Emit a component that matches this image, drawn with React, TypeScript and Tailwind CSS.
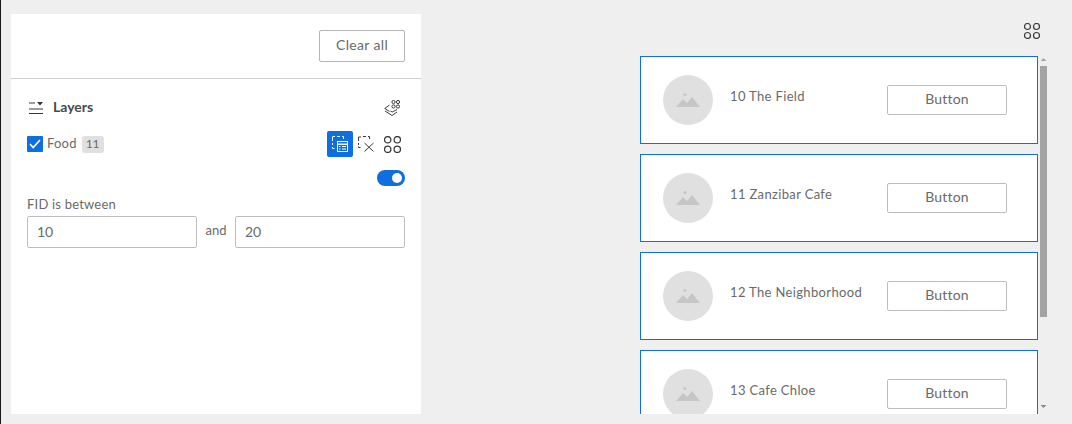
import React from "react";

const Grid = ({ size = 16 }: { size?: number }) => (
  <svg width={size} height={size} viewBox="0 0 16 16" fill="none" stroke="#3a3a3a" strokeWidth="1.2">
    <circle cx="3.5" cy="3.5" r="3" />
    <circle cx="12.5" cy="3.5" r="3" />
    <circle cx="3.5" cy="12.5" r="3" />
    <circle cx="12.5" cy="12.5" r="3" />
  </svg>
);

const Card = ({ title }: { title: string }) => (
  <div className="shrink-0 w-[398px] h-[88px] border border-[#0f6fe0] bg-white flex items-center pl-[22px] pr-[30px]">
    <div className="w-[50px] h-[50px] rounded-full bg-[#e0e0e0] flex items-center justify-center shrink-0">
      <svg width="26" height="16" viewBox="0 0 26 16" fill="#c6c6c6">
        <circle cx="10" cy="2.5" r="1.5" />
        <path d="M1 15 L8 7 L12 11 L17 5 L25 15 Z" />
      </svg>
    </div>
    <div className="ml-[17px] flex-1 text-[13px] text-[#6a6a6a] pb-[7px] tracking-[0.35px]">{title}</div>
    <button className="w-[120px] h-[30px] pb-[3px] border border-[#bdbdbd] rounded-[2px] text-[14px] text-[#6a6a6a] tracking-[0.2px] bg-white">Button</button>
  </div>
);

export default function App() {
  return (
    <div className="w-[1072px] h-[424px] bg-[#efefef] border-l border-[#1a1a1a] flex overflow-hidden font-['Lato','Noto_Sans',sans-serif] text-[#6a6a6a]">
      <div className="w-[410px] h-[400px] ml-[10px] mt-[14px] bg-white flex flex-col shrink-0">
        <div className="h-[65px] border-b border-[#d0d0d0] flex justify-end items-start pt-[16px] pr-[16px] shrink-0">
          <button className="w-[86px] h-[32px] pb-[3px] border border-[#b5b5b5] rounded-[2px] text-[14px] text-[#6a6a6a] tracking-[0.35px]">Clear all</button>
        </div>
        <div className="px-[16px] flex flex-col">
          <div className="flex items-center h-[20px] mt-[19px]">
            <svg width="16" height="16" viewBox="0 0 16 16" fill="none" stroke="#3a3a3a" strokeWidth="1" className="ml-[1px] mt-[2px]">
              <path d="M1 2 H7 M1 8 H15 M1 12.5 H15" />
              <path d="M9 1 H15 L12 4.5 Z" fill="#333" stroke="none" />
            </svg>
            <span className="ml-[9px] text-[14px] font-bold text-[#4a4a4a] pb-[3px]">Layers</span>
            <svg width="16" height="16" viewBox="0 0 16 16" fill="none" stroke="#3a3a3a" strokeWidth="1" className="ml-auto mr-[5px]">
              <circle cx="9.5" cy="2" r="1.6" />
              <circle cx="14" cy="2" r="1.6" />
              <circle cx="9.5" cy="6.5" r="1.6" />
              <circle cx="14" cy="6.5" r="1.6" />
              <path d="M5.5 5 L0.7 8.5 L5.5 11.5 M1 11 L8 15.5 L13 12 M6.5 11 L8.2 12 L13 9.5" />
            </svg>
          </div>
          <div className="flex items-center h-[26px] mt-[13px]">
            <div className="w-[16px] h-[16px] rounded-[1px] bg-[#0f6fe0] flex items-center justify-center">
              <svg width="12" height="10" viewBox="0 0 12 10" fill="none" stroke="white" strokeWidth="1.6">
                <path d="M1 5 L4.2 8.5 L11 1" />
              </svg>
            </div>
            <span className="ml-[4px] text-[13px] tracking-[0.2px]">Food</span>
            <span className="ml-[5px] w-[22px] h-[17px] rounded-[3px] bg-[#e0e0e0] text-[12px] flex items-center justify-center">11</span>
            <div className="ml-auto w-[26px] h-[26px] rounded-[2px] bg-[#0f6fe0] flex items-center justify-center">
              <svg width="16" height="16" viewBox="0 0 16 16" fill="none" stroke="white" strokeWidth="1">
                <path d="M0.5 5 V1 C0.5 0.7 0.7 0.5 1 0.5 H3 M5 0.5 H8 M10 0.5 H11.5 V3 M0.5 7 V9 M0.5 11 V12.5 H2.5" />
                <rect x="5.5" y="5.5" width="10" height="10" />
                <path d="M5.5 8.2 H15.5" strokeWidth="1.4" />
                <path d="M7 10.5 H8.5 M10 10.5 H14 M7 13 H8.5 M10 13 H14" />
              </svg>
            </div>
            <svg width="16" height="16" viewBox="0 0 16 16" fill="none" stroke="#3a3a3a" strokeWidth="1" className="ml-[5px]">
              <path d="M0.5 5 V1 H3 M5 0.5 H8 M10 0.5 H11.5 V3 M0.5 7 V9 M0.5 10.5 V11.5 H2.5" />
              <path d="M6.5 7 L15.5 15.5 M15.5 7 L6.5 15.5" />
            </svg>
            <div className="ml-[10px] mr-[4px] flex"><Grid size={17} /></div>
          </div>
          <div className="flex justify-end mt-[13px]">
            <div className="w-[28px] h-[16px] rounded-full bg-[#0f6fe0] flex items-center justify-end pr-[3px]">
              <div className="w-[10px] h-[10px] rounded-full bg-white" />
            </div>
          </div>
          <div className="text-[13px] mt-[9px] h-[18px] leading-[18px] tracking-[0.2px]">FID is between</div>
          <div className="flex items-center mt-[3px]">
            <div className="flex-1 h-[32px] pb-[2px] border border-[#bdbdbd] rounded-[2px] px-[9px] flex items-center text-[14px]">10</div>
            <span className="w-[38px] text-center text-[13px] pb-[3px]">and</span>
            <div className="flex-1 h-[32px] pb-[2px] border border-[#bdbdbd] rounded-[2px] px-[9px] flex items-center text-[14px]">20</div>
          </div>
        </div>
      </div>
      <div className="ml-[219px] flex flex-col w-[408px] shrink-0">
        <div className="h-[56px] flex justify-end items-start pt-[23px] pr-[8px] shrink-0"><Grid size={16} /></div>
        <div className="flex h-[358px] overflow-hidden">
          <div className="flex flex-col gap-[10px] w-[398px] overflow-hidden">
            <Card title="10 The Field" />
            <Card title="11 Zanzibar Cafe" />
            <Card title="12 The Neighborhood" />
            <Card title="13 Cafe Chloe" />
          </div>
          <div className="ml-[2px] w-[7px] flex flex-col items-center">
            <svg width="7" height="11" viewBox="0 0 7 11" className="shrink-0"><path d="M3.5 2 L6.5 5 H0.5 Z" fill="#a8a8a8" /></svg>
            <div className="w-[7px] h-[251px] bg-[#a3a3a3] -mt-[1px]" />
            <svg width="7" height="8" viewBox="0 0 7 8" className="shrink-0 mt-auto mb-[3px]"><path d="M0.5 2 H6.5 L3.5 5 Z" fill="#8a8a8a" /></svg>
          </div>
        </div>
      </div>
    </div>
  );
}
